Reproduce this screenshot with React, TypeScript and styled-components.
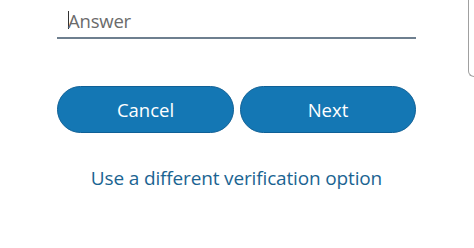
import React from "react";
import styled, { createGlobalStyle } from "styled-components";

const Global = createGlobalStyle`
  html, body { margin: 0; padding: 0; background: #ffffff; }
  body { width: 474px; height: 248px; overflow: hidden; font-family: "Open Sans", "Noto Sans", sans-serif; }
`;

const Page = styled.div`
  display: flex;
  align-items: flex-start;
  width: 474px;
  height: 248px;
`;

const Form = styled.div`
  display: flex;
  flex-direction: column;
  width: 359px;
  margin-left: 57px;
`;

const Field = styled.div`
  display: flex;
  align-items: center;
  box-sizing: border-box;
  height: 39px;
  padding-left: 11px;
  padding-top: 3px;
  border-bottom: 2px solid #6e7f8f;
`;

const Caret = styled.span`
  display: inline-block;
  width: 1px;
  height: 18px;
  background: #333;
  margin-right: -1px;
`;

const Placeholder = styled.span`
  font-size: 18.5px;
  color: #6b6b6b;
  letter-spacing: -0.2px;
`;

const Buttons = styled.div`
  display: grid;
  grid-template-columns: 177px 176px;
  gap: 6px;
  margin-top: 47px;
`;

const Pill = styled.button`
  height: 47px;
  border-radius: 24px;
  background: #1477b4;
  border: 1px solid #0f6096;
  color: #ffffff;
  font-family: "Open Sans", "Noto Sans", sans-serif;
  font-size: 18.5px;
  padding: 0;
  cursor: pointer;
`;

const Link = styled.a`
  margin-top: 32px;
  align-self: center;
  color: #1b6492;
  font-size: 19px;
  text-decoration: none;
  letter-spacing: -0.15px;
`;

const Edge = styled.div`
  margin-left: 52px;
  margin-top: -10px;
  width: 20px;
  height: 86px;
  border-left: 1.5px solid #a0a0a0;
  border-bottom: 1.5px solid #a0a0a0;
  border-bottom-left-radius: 6px;
  flex-shrink: 0;
`;

export default function App() {
  return (
    <>
      <Global />
      <Page>
        <Form>
          <Field>
            <Caret />
            <Placeholder>Answer</Placeholder>
          </Field>
          <Buttons>
            <Pill>Cancel</Pill>
            <Pill>Next</Pill>
          </Buttons>
          <Link href="#">Use a different verification option</Link>
        </Form>
        <Edge />
      </Page>
    </>
  );
}
